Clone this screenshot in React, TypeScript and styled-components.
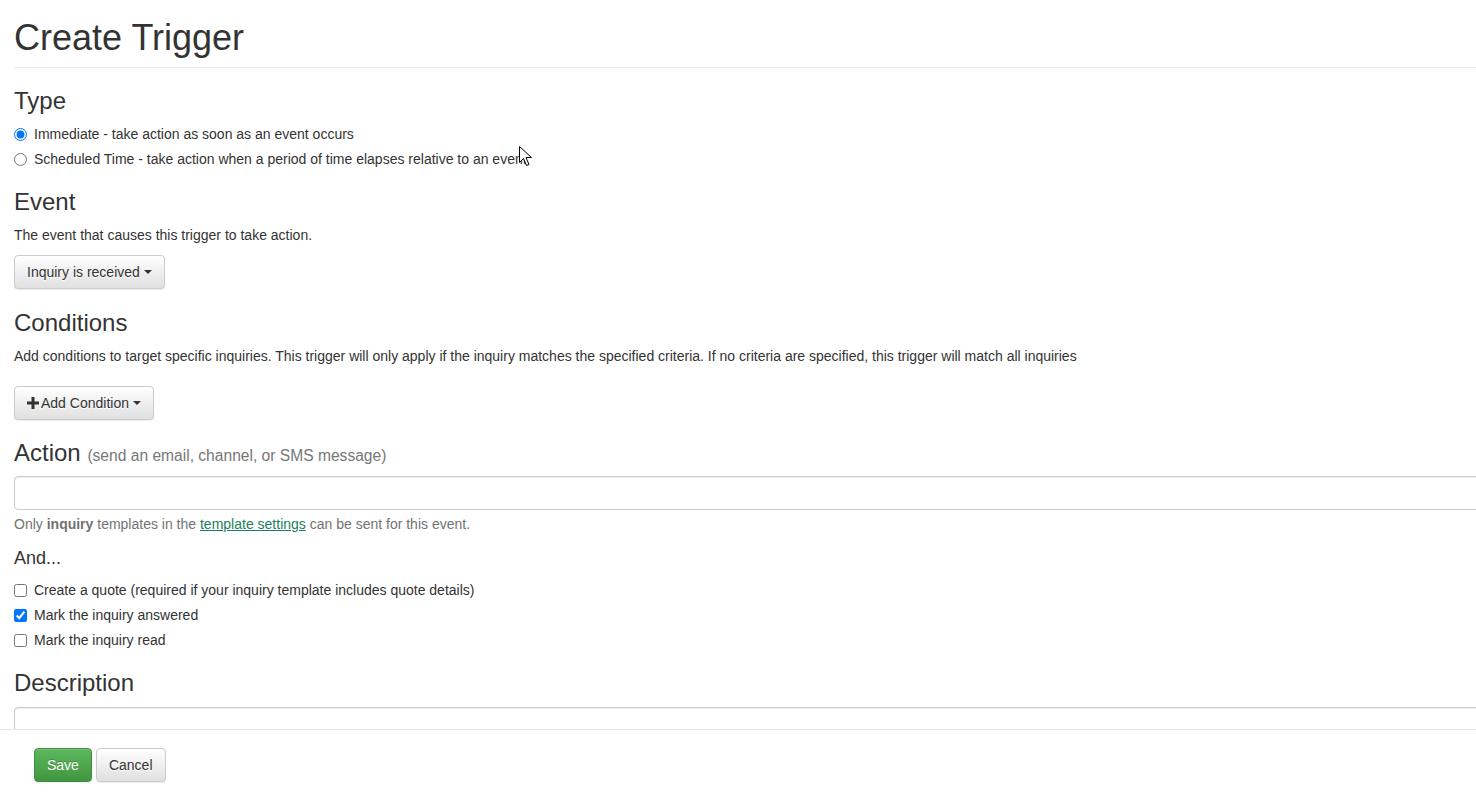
import React, { useState } from 'react';
import styled, { createGlobalStyle } from 'styled-components';

const GlobalStyle = createGlobalStyle`
  html, body {
    margin: 0;
    padding: 0;
    background: #fff;
    overflow: hidden;
  }
  body {
    font-family: "Liberation Sans", Arial, sans-serif;
    font-size: 14px;
    line-height: 20px;
    color: #333;
  }
  * { box-sizing: border-box; }
`;

const Page = styled.div`
  position: relative;
  display: flex;
  flex-direction: column;
  height: 100vh;
  width: 100vw;
  overflow: hidden;
`;

const Main = styled.div`
  flex: 1;
  overflow: hidden;
  padding: 18px 0 0 14px;
`;

const Container = styled.div`
  width: 1520px;
`;

const PageTitle = styled.h1`
  margin: 0 0 20px;
  padding-bottom: 9px;
  border-bottom: 1px solid #eee;
  font-size: 36px;
  line-height: 40px;
  font-weight: 500;
  color: #333;
`;

const SectionTitle = styled.h3<{ $top?: number; $bottom?: number }>`
  margin: ${(p) => p.$top ?? 20}px 0 ${(p) => p.$bottom ?? 10}px;
  font-size: 24px;
  line-height: 26.4px;
  font-weight: 500;
  color: #333;
`;

const Muted = styled.small`
  font-size: 65%;
  font-weight: 400;
  color: #777;
`;

const SubTitle = styled.h4`
  margin: 15px 0 12px;
  font-size: 18px;
  line-height: 19.8px;
  font-weight: 500;
  color: #333;
`;

const Text = styled.p<{ $top?: number; $bottom?: number }>`
  margin: ${(p) => p.$top ?? 0}px 0 ${(p) => p.$bottom ?? 10}px;
`;

const OptionList = styled.div`
  display: flex;
  flex-direction: column;
  gap: 5px;
`;

const Option = styled.label`
  display: flex;
  align-items: center;
  gap: 7px;
  height: 20px;
  cursor: pointer;
  font-weight: 400;

  input {
    width: 13px;
    height: 13px;
    margin: 0;
    flex: none;
  }
`;

const Button = styled.button<{ $variant?: 'default' | 'success' }>`
  display: inline-flex;
  align-items: center;
  height: 34px;
  padding: 6px 12px;
  font-family: inherit;
  font-size: 14px;
  line-height: 20px;
  border-radius: 4px;
  cursor: pointer;
  color: ${(p) => (p.$variant === 'success' ? '#fff' : '#333')};
  border: 1px solid ${(p) => (p.$variant === 'success' ? '#3e8f3e' : '#ccc')};
  background-image: ${(p) =>
    p.$variant === 'success'
      ? 'linear-gradient(to bottom, #5cb85c 0, #419641 100%)'
      : 'linear-gradient(to bottom, #fff 0, #e0e0e0 100%)'};
  text-shadow: ${(p) => (p.$variant === 'success' ? '0 -1px 0 rgba(0,0,0,.2)' : '0 1px 0 #fff')};
  box-shadow: inset 0 1px 0 rgba(255, 255, 255, 0.15), 0 1px 1px rgba(0, 0, 0, 0.075);
`;

const Caret = styled.span`
  display: inline-block;
  width: 0;
  height: 0;
  margin-left: 4px;
  border-top: 4px solid #333;
  border-right: 4px solid transparent;
  border-left: 4px solid transparent;
`;

const PlusIcon = styled.svg`
  width: 12px;
  height: 12px;
  margin-right: 2px;
`;

const TextInput = styled.input`
  display: block;
  width: 100%;
  height: 34px;
  margin: 0;
  padding: 6px 12px;
  font-family: inherit;
  font-size: 14px;
  border: 1px solid #ccc;
  border-radius: 4px;
  box-shadow: inset 0 1px 1px rgba(0, 0, 0, 0.075);
  outline: none;
`;

const TextArea = styled.textarea`
  display: block;
  width: 100%;
  height: 54px;
  margin-top: 8px;
  padding: 6px 12px;
  font-family: inherit;
  font-size: 14px;
  border: 1px solid #ccc;
  border-radius: 4px;
  box-shadow: inset 0 1px 1px rgba(0, 0, 0, 0.075);
  resize: none;
  outline: none;
`;

const HelpBlock = styled.span`
  display: block;
  margin: 4px 0 10px;
  color: #737373;

  b { font-weight: 700; }
  a { color: #1a7f5a; text-decoration: underline; }
`;

const Footer = styled.div`
  flex: none;
  height: 69px;
  display: flex;
  align-items: flex-start;
  gap: 4px;
  padding: 18px 0 0 34px;
  border-top: 1px solid #e5e5e5;
  background: #fff;
`;

const Pointer = styled.svg`
  position: absolute;
  left: 519px;
  top: 146px;
  width: 13px;
  height: 21px;
`;

export default function App() {
  const [type, setType] = useState('immediate');
  const [opts, setOpts] = useState({ quote: false, answered: true, read: false });

  return (
    <Page>
      <GlobalStyle />
      <Main>
        <Container>
          <PageTitle>Create Trigger</PageTitle>

          <SectionTitle $top={0}>Type</SectionTitle>
          <OptionList>
            <Option>
              <input type="radio" name="type" checked={type === 'immediate'} onChange={() => setType('immediate')} />
              Immediate - take action as soon as an event occurs
            </Option>
            <Option>
              <input type="radio" name="type" checked={type === 'scheduled'} onChange={() => setType('scheduled')} />
              Scheduled Time - take action when a period of time elapses relative to an event
            </Option>
          </OptionList>

          <SectionTitle $bottom={9}>Event</SectionTitle>
          <Text $bottom={10}>The event that causes this trigger to take action.</Text>
          <Button>
            Inquiry is received <Caret />
          </Button>

          <SectionTitle $top={21}>Conditions</SectionTitle>
          <Text $top={2} $bottom={20}>
            Add conditions to target specific inquiries. This trigger will only apply if the inquiry matches the specified criteria. If no criteria are specified, this trigger will match all inquiries
          </Text>
          <Button>
            <PlusIcon viewBox="0 0 12 12">
              <path d="M4.5 0h3v4.5H12v3H7.5V12h-3V7.5H0v-3h4.5z" fill="#333" />
            </PlusIcon>
            Add Condition <Caret />
          </Button>

          <SectionTitle $top={20} $bottom={6}>
            Action <Muted>(send an email, channel, or SMS message)</Muted>
          </SectionTitle>
          <TextInput type="text" />
          <HelpBlock>
            Only <b>inquiry</b> templates in the <a href="#">template settings</a> can be sent for this event.
          </HelpBlock>

          <SubTitle>And...</SubTitle>
          <OptionList>
            <Option>
              <input type="checkbox" checked={opts.quote} onChange={() => setOpts({ ...opts, quote: !opts.quote })} />
              Create a quote (required if your inquiry template includes quote details)
            </Option>
            <Option>
              <input type="checkbox" checked={opts.answered} onChange={() => setOpts({ ...opts, answered: !opts.answered })} />
              Mark the inquiry answered
            </Option>
            <Option>
              <input type="checkbox" checked={opts.read} onChange={() => setOpts({ ...opts, read: !opts.read })} />
              Mark the inquiry read
            </Option>
          </OptionList>

          <SectionTitle $top={20}>Description</SectionTitle>
          <TextArea />
        </Container>
      </Main>
      <Footer>
        <Button $variant="success">Save</Button>
        <Button>Cancel</Button>
      </Footer>
      <Pointer viewBox="0 0 13 21">
        <path d="M0.5 0.5v16l4-4 3 7 2.5-1-3-7h5.5z" fill="#fff" stroke="#000" strokeWidth="1" />
      </Pointer>
    </Page>
  );
}
